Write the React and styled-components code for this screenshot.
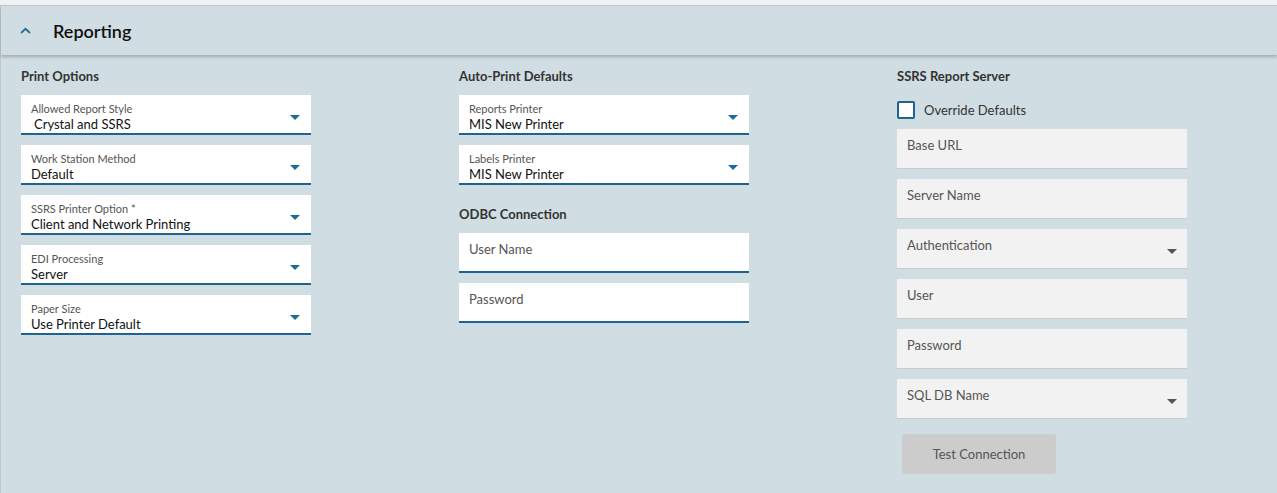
import React from "react";
import styled, { createGlobalStyle } from "styled-components";

const GlobalStyle = createGlobalStyle`
  html, body { margin: 0; padding: 0; }
  body {
    background: #eef2f5;
    font-family: "Lato", "Liberation Sans", sans-serif;
    color: #222;
  }
  * { box-sizing: border-box; }
`;

const Page = styled.div`
  padding-top: 5px;
  min-height: 493px;
`;

const Panel = styled.section`
  background: #d0dde2;
  border-top: 1px solid #c3c8cb;
  border-left: 1px solid #c3c8cb;
  min-height: 488px;
`;

const Header = styled.header`
  position: relative;
  height: 49px;
  display: flex;
  align-items: center;
  gap: 22px;
  padding-left: 19px;
  box-shadow: 0 2px 3px rgba(0, 0, 0, 0.22);
`;

const Title = styled.h2`
  margin: 0;
  font-size: 18px;
  font-weight: 600;
  color: #111;
`;

const Body = styled.div`
  display: grid;
  grid-template-columns: 438px 438px 290px;
  padding: 12px 0 0 20px;
`;

const Column = styled.div`
  display: flex;
  flex-direction: column;
  width: 290px;
`;

const SectionTitle = styled.h3`
  margin: ${(p) => (p.$spaced ? "20px" : "0")} 0 10px;
  font-size: 13px;
  line-height: 18px;
  font-weight: 700;
  color: #333;
`;

const Stack = styled.div`
  display: flex;
  flex-direction: column;
  gap: 10px;
`;

const SelectBox = styled.div`
  position: relative;
  height: 40px;
  background: ${(p) => (p.$muted ? "#f2f2f2" : "#fff")};
  border-bottom: ${(p) => (p.$muted ? "1px solid #c9cbcc" : "2px solid #1f6390")};
  padding: 7px 10px 0;
`;

const FieldLabel = styled.div`
  font-size: 11px;
  line-height: 13px;
  color: #555;
`;

const FieldValue = styled.div`
  margin-top: 1px;
  font-size: 13px;
  line-height: 16px;
  color: #111;
  padding-left: ${(p) => p.$indent || 0}px;
`;

const Placeholder = styled.div`
  font-size: 13px;
  line-height: 16px;
  color: #555;
  padding-top: 1px;
`;

const Caret = styled.span`
  position: absolute;
  right: ${(p) => (p.$muted ? 10 : 11)}px;
  top: 20px;
  width: 0;
  height: 0;
  border-left: 5px solid transparent;
  border-right: 5px solid transparent;
  border-top: 5px solid ${(p) => (p.$muted ? "#555" : "#1e6b98")};
`;

const CheckRow = styled.label`
  display: flex;
  align-items: center;
  gap: 9px;
  height: 19px;
  margin: 5px 0 10px;
  font-size: 13px;
  color: #333;
`;

const Box = styled.span`
  width: 18px;
  height: 18px;
  border: 2px solid #1f6390;
  border-radius: 2px;
  background: #fff;
`;

const Button = styled.button`
  margin: 15px 0 0 5px;
  width: 154px;
  height: 40px;
  border: none;
  border-radius: 3px;
  background: #cccccc;
  color: #555;
  font-family: inherit;
  font-size: 13px;
`;

function Select({ label, value, indent, muted }) {
  return (
    <SelectBox $muted={muted}>
      {muted ? <Placeholder>{label}</Placeholder> : <FieldLabel>{label}</FieldLabel>}
      {!muted && <FieldValue $indent={indent}>{value}</FieldValue>}
      <Caret $muted={muted} />
    </SelectBox>
  );
}

function TextField({ label, muted }) {
  return (
    <SelectBox $muted={muted}>
      <Placeholder>{label}</Placeholder>
    </SelectBox>
  );
}

export default function App() {
  return (
    <>
      <GlobalStyle />
      <Page>
        <Panel>
          <Header>
            <svg width="11" height="7" viewBox="0 0 11 7">
              <path d="M1 6 L5.5 1.8 L10 6" fill="none" stroke="#2a6d94" strokeWidth="1.8" />
            </svg>
            <Title>Reporting</Title>
          </Header>
          <Body>
            <Column>
              <SectionTitle>Print Options</SectionTitle>
              <Stack>
                <Select label="Allowed Report Style" value="Crystal and SSRS" indent={3} />
                <Select label="Work Station Method" value="Default" />
                <Select label="SSRS Printer Option *" value="Client and Network Printing" />
                <Select label="EDI Processing" value="Server" />
                <Select label="Paper Size" value="Use Printer Default" />
              </Stack>
            </Column>
            <Column>
              <SectionTitle>Auto-Print Defaults</SectionTitle>
              <Stack>
                <Select label="Reports Printer" value="MIS New Printer" />
                <Select label="Labels Printer" value="MIS New Printer" />
              </Stack>
              <SectionTitle $spaced>ODBC Connection</SectionTitle>
              <Stack>
                <TextField label="User Name" />
                <TextField label="Password" />
              </Stack>
            </Column>
            <Column>
              <SectionTitle>SSRS Report Server</SectionTitle>
              <CheckRow>
                <Box />
                Override Defaults
              </CheckRow>
              <Stack>
                <TextField label="Base URL" muted />
                <TextField label="Server Name" muted />
                <Select label="Authentication" muted />
                <TextField label="User" muted />
                <TextField label="Password" muted />
                <Select label="SQL DB Name" muted />
              </Stack>
              <div>
                <Button>Test Connection</Button>
              </div>
            </Column>
          </Body>
        </Panel>
      </Page>
    </>
  );
}
